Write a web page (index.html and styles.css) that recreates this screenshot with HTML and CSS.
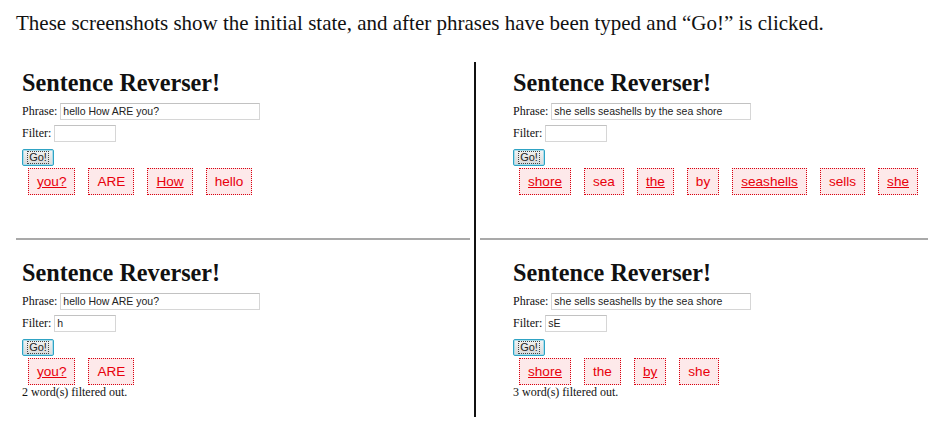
FILE: index.html
```html
<!DOCTYPE html>
<html>
<head>
<meta charset="utf-8">
<link rel="stylesheet" href="styles.css">
</head>
<body>
<p class="intro">These screenshots show the initial state, and after phrases have been typed and “Go!” is clicked.</p>
<div class="grid">
  <section class="cell top left">
    <h2 class="title">Sentence Reverser!</h2>
    <div class="row"><span class="label">Phrase:</span><span class="input phrase">hello How ARE you?</span></div>
    <div class="row"><span class="label">Filter:</span><span class="input filter"></span></div>
    <div class="btnrow"><span class="btn"><span class="focus">Go!</span></span></div>
    <div class="words">
      <span class="word u">you?</span><span class="word">ARE</span><span class="word u">How</span><span class="word">hello</span>
    </div>
  </section>
  <div class="divider"><div class="vline"></div></div>
  <section class="cell top right">
    <h2 class="title">Sentence Reverser!</h2>
    <div class="row"><span class="label">Phrase:</span><span class="input phrase">she sells seashells by the sea shore</span></div>
    <div class="row"><span class="label">Filter:</span><span class="input filter"></span></div>
    <div class="btnrow"><span class="btn"><span class="focus">Go!</span></span></div>
    <div class="words">
      <span class="word u">shore</span><span class="word">sea</span><span class="word u">the</span><span class="word">by</span><span class="word u">seashells</span><span class="word">sells</span><span class="word u">she</span>
    </div>
  </section>
  <section class="cell bottom left">
    <h2 class="title">Sentence Reverser!</h2>
    <div class="row"><span class="label">Phrase:</span><span class="input phrase">hello How ARE you?</span></div>
    <div class="row"><span class="label">Filter:</span><span class="input filter">h</span></div>
    <div class="btnrow"><span class="btn"><span class="focus">Go!</span></span></div>
    <div class="words">
      <span class="word u">you?</span><span class="word">ARE</span>
    </div>
    <p class="note">2 word(s) filtered out.</p>
  </section>
  <section class="cell bottom right">
    <h2 class="title">Sentence Reverser!</h2>
    <div class="row"><span class="label">Phrase:</span><span class="input phrase">she sells seashells by the sea shore</span></div>
    <div class="row"><span class="label">Filter:</span><span class="input filter">sE</span></div>
    <div class="btnrow"><span class="btn"><span class="focus">Go!</span></span></div>
    <div class="words">
      <span class="word u">shore</span><span class="word">the</span><span class="word u">by</span><span class="word">she</span>
    </div>
    <p class="note">3 word(s) filtered out.</p>
  </section>
</div>
</body>
</html>
```
FILE: styles.css
```css
html, body {
  margin: 0;
  padding: 0;
  background: #fff;
}
body {
  font-family: "Liberation Serif", "Times New Roman", serif;
  color: #111;
}
.intro {
  margin: 11px 0 0 16px;
  font-size: 21px;
  line-height: 24px;
}
.grid {
  display: grid;
  grid-template-columns: 454px 10px 448px;
  grid-template-rows: 178px 177px;
  margin: 27px 0 0 16px;
}
.divider {
  grid-column: 2;
  grid-row: 1 / 3;
  display: flex;
  justify-content: center;
}
.vline {
  width: 2px;
  height: 100%;
  background: #111;
}
.cell {
  display: flex;
  flex-direction: column;
  align-items: flex-start;
}
.cell.left { grid-column: 1; padding-left: 6px; }
.cell.right { grid-column: 3; padding-left: 33px; }
.cell.top {
  grid-row: 1;
  padding-top: 7px;
  border-bottom: 2px solid #a9a9a9;
}
.cell.bottom {
  grid-row: 2;
  padding-top: 19px;
}
.title {
  margin: 0;
  font-size: 24.2px;
  line-height: 28px;
  font-weight: bold;
}
.row {
  display: flex;
  align-items: center;
  height: 17px;
  margin-top: 6px;
  font-size: 12px;
}
.row + .row { margin-top: 5px; }
.label { margin-right: 3px; }
.input {
  box-sizing: border-box;
  height: 17px;
  border: 1px solid #d6d6d6;
  border-top-color: #c2c2c2;
  padding: 0 2px;
  font-family: "Liberation Sans", Arial, sans-serif;
  font-size: 10.5px;
  line-height: 15px;
  color: #222;
  background: #fff;
}
.input.phrase { width: 200px; }
.input.filter { width: 62px; }
.btnrow {
  margin-top: 7px;
  height: 16px;
  display: flex;
}
.btn {
  box-sizing: border-box;
  width: 32px;
  height: 17px;
  border: 1px solid #2fa3c4;
  border-radius: 2px;
  background: linear-gradient(#f4f4f4, #d8d8d8);
  box-shadow: inset 0 0 0 1px #a9dceb;
  display: flex;
  align-items: center;
  justify-content: center;
  font-family: "Liberation Sans", Arial, sans-serif;
  font-size: 11px;
  color: #222;
}
.focus {
  outline: 1px dotted #444;
  line-height: 11px;
  padding: 0 1px;
}
.words {
  display: flex;
  gap: 13px;
  margin-top: 3px;
  padding-left: 6px;
}
.word {
  border: 1px dotted #d80010;
  background: #fde9ea;
  padding: 4px 8px;
  line-height: 17px;
  font-family: "Liberation Sans", Arial, sans-serif;
  font-size: 13.6px;
  color: #e8000b;
}
.word.u { text-decoration: underline; }
.note {
  margin: 0;
  font-size: 12px;
  line-height: 15px;
}
```
